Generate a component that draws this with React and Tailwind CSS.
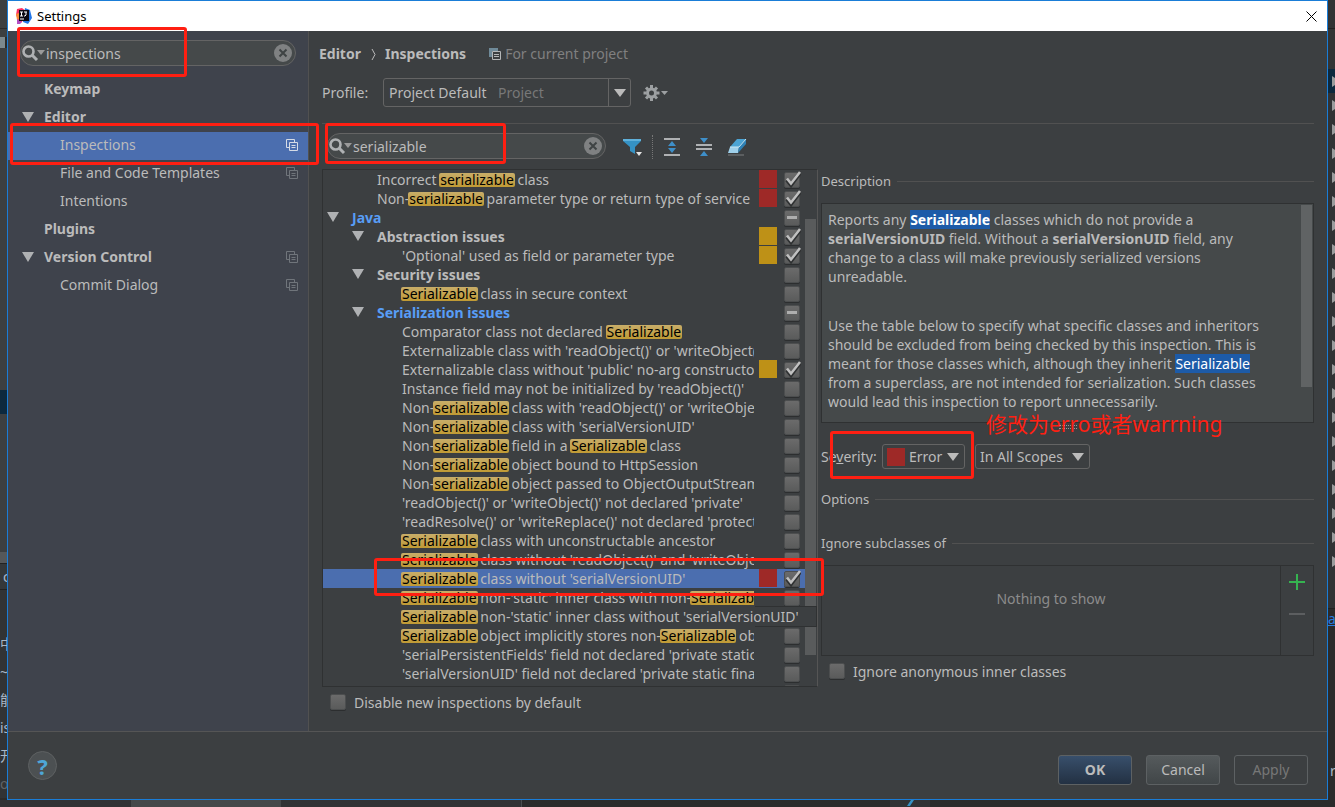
import { useState } from "react";

const SIDEBAR = [
  { label: "Keymap", bold: true },
  { label: "Editor", bold: true, open: true },
  { label: "Inspections", scope: true, selected: true },
  { label: "File and Code Templates", scope: true },
  { label: "Intentions" },
  { label: "Plugins", bold: true },
  { label: "Version Control", bold: true, open: true, scope: true },
  { label: "Commit Dialog", scope: true },
];

// level 0 = language, 1 = group, 2 = nested inspection
const INSPECTIONS = [
  { level: 1, text: "Incorrect serializable class", color: "red", state: "on" },
  { level: 1, text: "Non-serializable parameter type or return type of service method", color: "red", state: "on" },
  { level: 0, text: "Java", group: true, changed: true, state: "mixed" },
  { level: 1, text: "Abstraction issues", group: true, color: "yellow", state: "on" },
  { level: 2, text: "'Optional' used as field or parameter type", color: "yellow", state: "on" },
  { level: 1, text: "Security issues", group: true },
  { level: 2, text: "Serializable class in secure context" },
  { level: 1, text: "Serialization issues", group: true, changed: true, state: "mixed" },
  { level: 2, text: "Comparator class not declared Serializable" },
  { level: 2, text: "Externalizable class with 'readObject()' or 'writeObject()'" },
  { level: 2, text: "Externalizable class without 'public' no-arg constructor", color: "yellow", state: "on" },
  { level: 2, text: "Instance field may not be initialized by 'readObject()'" },
  { level: 2, text: "Non-serializable class with 'readObject()' or 'writeObject()'" },
  { level: 2, text: "Non-serializable class with 'serialVersionUID'" },
  { level: 2, text: "Non-serializable field in a Serializable class" },
  { level: 2, text: "Non-serializable object bound to HttpSession" },
  { level: 2, text: "Non-serializable object passed to ObjectOutputStream" },
  { level: 2, text: "'readObject()' or 'writeObject()' not declared 'private'" },
  { level: 2, text: "'readResolve()' or 'writeReplace()' not declared 'protected'" },
  { level: 2, text: "Serializable class with unconstructable ancestor" },
  { level: 2, text: "Serializable class without 'readObject()' and 'writeObject()'" },
  { level: 2, text: "Serializable class without 'serialVersionUID'", color: "red", state: "on", selected: true },
  { level: 2, text: "Serializable non-'static' inner class with non-Serializable outer" },
  { level: 2, text: "Serializable non-'static' inner class without 'serialVersionUID'", tooltip: true },
  { level: 2, text: "Serializable object implicitly stores non-Serializable object" },
  { level: 2, text: "'serialPersistentFields' field not declared 'private static final'" },
  { level: 2, text: "'serialVersionUID' field not declared 'private static final'" },
  { level: 2, text: "" },
];

const INDENT = ["pl-[29px]", "pl-[54px]", "pl-[79px]"];
const SWATCH = { red: "bg-[#9e2927]", yellow: "bg-[#be9117]" };

const Arrow = ({ className = "", height = 10 }) => (
  <svg className={className} width="12" height={height} viewBox="0 0 12 10" preserveAspectRatio="none" aria-hidden="true">
    <path d="M0 0h12L6 10z" fill="currentColor" />
  </svg>
);

const ScopeIcon = ({ className = "" }) => (
  <svg className={className} width="12" height="12" viewBox="0 0 12 12" fill="none" stroke="currentColor" aria-hidden="true">
    <path d="M3 8.500H.5v-8h8V3" />
    <path d="M3.500 3.500h8v8h-8zM5.500 6.500h4M5.500 8.500h4" />
  </svg>
);

const SearchField = ({ id, label, value, onChange }) => (
  <div className="flex h-[26px] items-center rounded-full border border-[#646464] bg-[#45494a] pr-[3px]">
    <svg width="24" height="18" viewBox="0 0 24 18" fill="none" aria-hidden="true">
      <circle cx="7.500" cy="7.500" r="5" stroke="#afb1b3" strokeWidth="2.600" />
      <path d="M11 11l5 5" stroke="#afb1b3" strokeWidth="3" />
      <path d="M16 6h8l-4 5z" fill="#9a9a9a" />
    </svg>
    <label htmlFor={id} className="sr-only">
      {label}
    </label>
    <input
      id={id}
      type="text"
      value={value}
      onChange={(e) => onChange(e.target.value)}
      className="min-w-0 flex-1 bg-transparent pt-[2px] pl-px text-[#bbbbbb] outline-none"
    />
    <button type="button" aria-label="Clear" onClick={() => onChange("")}>
      <svg width="18" height="18" viewBox="0 0 18 18" aria-hidden="true">
        <circle cx="9" cy="9" r="9" fill="#7f8182" />
        <path d="M5.500 5.500l7 7M12.500 5.500l-7 7" stroke="#3f4344" strokeWidth="2" />
      </svg>
    </button>
  </div>
);

const CheckBox = ({ state, ...props }) => (
  <span className="relative flex size-[18px] shrink-0">
    <input
      type="checkbox"
      defaultChecked={state === "on"}
      className="peer m-px size-4 appearance-none rounded-[2px] border border-[#4c4e4f] bg-linear-to-b from-[#6b6b6b] to-[#5a5b5b] shadow-[0_1px_0_#2c2e2f]"
      {...props}
    />
    <svg
      className="pointer-events-none absolute inset-0 hidden peer-checked:block"
      width="18"
      height="18"
      viewBox="0 0 18 18"
      fill="none"
      aria-hidden="true"
    >
      <path d="M4 9l4 5 9-12" stroke="#2f3132" strokeWidth="4" />
      <path d="M4 7.500l4 5 9-11.500" stroke="#c0c0c0" strokeWidth="2.600" />
    </svg>
    {state === "mixed" && <span className="pointer-events-none absolute top-[7px] left-1 h-[3px] w-[10px] bg-[#aeaeae]" />}
  </span>
);

const Highlighted = ({ text }) =>
  text.split(/(\bserializable)/i).map((part, i) =>
    i % 2 ? (
      <mark
        key={i}
        className="-mx-px inline-block h-[14px] rounded-[2px] bg-linear-to-b from-[#c8ad68] to-[#c09a33] px-px leading-[14px] text-black"
      >
        {part}
      </mark>
    ) : (
      part
    )
  );

const InspectionRow = ({ item }) => (
  <li className={`relative flex h-[19px] shrink-0 items-center ${item.selected ? "bg-[#4b6eaf]" : ""}`}>
    <div
      className={`relative min-w-0 flex-1 leading-[19px] whitespace-pre ${INDENT[item.level]} ${
        item.tooltip ? "z-20" : "overflow-hidden"
      } ${item.group ? "font-bold" : ""} ${item.changed ? "text-[#589df6]" : ""}`}
    >
      {item.group && <Arrow className={`absolute top-1 text-[#afb1b3] ${item.level ? "left-[29px]" : "left-1"}`} />}
      <Highlighted text={item.text} />
    </div>
    {item.tooltip && (
      <span className="absolute -top-px right-[-12px] z-10 h-[21px] w-[62px] border border-l-0 border-[#2f3132] bg-[#3c3f41]" />
    )}
    <span className={`mr-[6px] mb-px ml-[5px] h-[18px] w-[18px] ${item.color ? SWATCH[item.color] : ""}`} />
    <CheckBox state={item.state} aria-label={item.text || "More"} />
    <span className="w-1" />
  </li>
);

const Titled = ({ children }) => (
  <h3 className="flex h-5 items-center gap-[6px] text-[13px]">
    {children}
    <span className="h-px flex-1 bg-[#515151]" />
  </h3>
);

const ToolIcon = ({ label, children }) => (
  <button type="button" aria-label={label} className="shrink-0">
    <svg width="20" height="20" viewBox="0 0 20 20" fill="none" aria-hidden="true">
      {children}
    </svg>
  </button>
);

// slices of the editor that stay visible around the dialog
const LeftEdge = () => (
  <div className="flex w-[7px] shrink-0 flex-col overflow-hidden bg-[#2b2b2b] whitespace-nowrap text-[#a9b7c6]">
    <div className="h-[29px] border-b border-[#2a2a2a] bg-[#3c3f41]" />
    <div className="h-2 bg-[#3c3f41]" />
    <div className="h-[11px] w-[5px] bg-[#7c898e]" />
    <div className="h-[342px] bg-[#3c3f41]" />
    <div className="h-6 bg-[#0d293e]" />
    <div className="h-[138px] bg-[#3c3f41]" />
    <div className="h-[11px] bg-[#55585a]" />
    <div className="h-[27px] border-y border-[#222222] bg-[#34383a] pl-[3px] leading-[25px]">c</div>
    <div className="h-10 bg-[#313335]" />
    <div className="flex flex-col bg-[#313335] text-sm leading-7">
      <span>中</span>
      <span>~</span>
      <span>能</span>
      <span>is</span>
      <span>开</span>
      <span className="text-[#606366]">on</span>
    </div>
  </div>
);

const RightEdge = () => (
  <div className="flex w-[7px] shrink-0 flex-col overflow-hidden bg-[#2b2b2b] whitespace-nowrap">
    <div className="h-[29px] border-b border-[#222222] bg-[#313335]" />
    <div className="h-10 bg-[#323435]" />
    {Array.from({ length: 21 }, (_, i) => (
      <div key={i} className={`flex h-6 items-center justify-end ${i === 0 ? "bg-[#0d293e]" : "bg-[#313335]"}`}>
        <svg width="3" height="11" viewBox="0 0 3 11" aria-hidden="true">
          <path d="M0 0l3 2v7l-3 2z" fill="#9a9c9d" />
        </svg>
      </div>
    ))}
    <div className="h-[36px] border-b border-[#222222] bg-[#313335]" />
    <div className="h-6 text-sm text-[#287bde] underline">at</div>
    <div className="h-32" />
    <div className="pl-[2px] text-sm text-[#a9b7c6]">r</div>
  </div>
);

const App = () => {
  const [settingsQuery, setSettingsQuery] = useState("inspections");
  const [inspectionQuery, setInspectionQuery] = useState("serializable");

  return (
    <div className="relative flex h-screen flex-col overflow-hidden bg-[#2b2b2b] font-['Noto_Sans','Noto_Sans_CJK_SC',sans-serif] text-sm text-[#bbbbbb]">
      <div className="flex min-h-0 flex-1">
        <LeftEdge />
        <div className="flex min-w-0 flex-1 flex-col border border-[#1a7dd7] bg-[#3c3f41]">
          <header className="flex h-[30px] shrink-0 items-center gap-[5px] bg-white pr-[10px] pl-2 text-[13px] text-black">
            <svg width="16" height="16" viewBox="0 0 16 16" aria-hidden="true">
              <path d="M1 1l5-1 4 3-4 11-5 2 1-5-2-4z" fill="#fc2f62" />
              <path d="M9 0l5 2 2 8-4 6-5-2z" fill="#2377e8" />
              <path d="M0 6l3-1 1 6-3 1z" fill="#f98b3a" />
              <path d="M1 11l5 3-2 2H1z" fill="#b24fc4" />
              <path d="M3 2h10v11H3z" fill="#0a0a12" />
              <path d="M4 4h3M5.500 4v4M4 8h3M8 4h3M10 4v3l-1 1H8M4 11h4" stroke="#fff" fill="none" />
            </svg>
            <h1 className="flex-1">Settings</h1>
            <button type="button" aria-label="Close">
              <svg width="11" height="11" viewBox="0 0 11 11" stroke="#000" aria-hidden="true">
                <path d="M.5.5l10 10M10.500.5l-10 10" />
              </svg>
            </button>
          </header>

          <div className="flex min-h-0 flex-1 border-b border-[#555555]">
            <nav className="w-[301px] shrink-0 border-r border-[#515151] bg-[#3f434c] pt-[9px]">
              <div className="mx-3 mb-[10px]">
                <SearchField id="settings-search" label="Search settings" value={settingsQuery} onChange={setSettingsQuery} />
              </div>
              <ul>
                {SIDEBAR.map((item) => (
                  <li key={item.label} className={item.selected ? "bg-[#4b6eaf]" : ""}>
                    <a href="#" className="flex h-7 items-center pr-[10px] pb-[2px] pl-[14px]">
                      <span className="w-[22px]">{item.open && <Arrow className="text-[#afb1b3]" />}</span>
                      <span className={`flex-1 ${item.bold ? "font-bold" : "pl-4"}`}>{item.label}</span>
                      {item.scope && <ScopeIcon className={item.selected ? "text-[#d5dbe6]" : "text-[#70757b]"} />}
                    </a>
                  </li>
                ))}
              </ul>
            </nav>

            <main className="flex min-w-0 flex-1 flex-col px-[13px] pt-3">
              <div className="-ml-[3px] flex h-[22px] items-center">
                <h2 className="flex items-center font-bold">
                  <span>Editor</span>
                  <svg className="mr-[9px] ml-[10px]" width="5" height="11" viewBox="0 0 5 11" fill="none" stroke="#bbbbbb" aria-hidden="true">
                    <path d="M1 0l3 5.500L1 11" />
                  </svg>
                  <span>Inspections</span>
                </h2>
                <svg className="mr-1 ml-[23px]" width="12" height="12" viewBox="0 0 12 12" fill="none" aria-hidden="true">
                  <path d="M0 0h9v3H3v6H0z" fill="#6f8a99" />
                  <path d="M3.500 3.500h8v8h-8z" stroke="#b5b7b8" />
                  <path d="M5 6.500h5M5 8.500h5" stroke="#b5b7b8" />
                </svg>
                <span className="text-[#808080]">For current project</span>
              </div>

              <div className="mt-[13px] flex h-[29px] items-center">
                <label htmlFor="profile" className="w-[61px]">
                  Profile:
                </label>
                <div className="relative flex h-[29px] w-[248px] items-center rounded-[3px] border border-[#646464]">
                  <select id="profile" className="h-full w-full appearance-none bg-transparent pl-[5px] outline-none">
                    <option>Project Default</option>
                  </select>
                  <span className="pointer-events-none absolute left-[114px] text-[#787878]">Project</span>
                  <span className="pointer-events-none absolute right-0 flex h-full w-[22px] items-center justify-center border-l border-[#646464]">
                    <Arrow height={8} />
                  </span>
                </div>
                <button type="button" aria-label="Profile actions" className="ml-3">
                  <svg width="26" height="18" viewBox="0 0 26 18" fill="none" aria-hidden="true">
                    <circle cx="8.500" cy="9" r="4" stroke="#9da0a2" strokeWidth="3" />
                    <path
                      d="M8.500 1v3M8.500 14v3M.5 9h3M13.500 9h3M3 3.500l2 2M12 12.500l2 2M14 3.500l-2 2M5 12.500l-2 2"
                      stroke="#9da0a2"
                      strokeWidth="3"
                    />
                    <path d="M18 7h7l-3.500 4z" fill="#9da0a2" />
                  </svg>
                </button>
              </div>

              <hr className="mt-4 shrink-0 border-[#515151]" />

              <div className="mt-[9px] flex h-[26px] shrink-0 items-center">
                <div className="ml-[5px] w-[279px]">
                  <SearchField id="inspection-search" label="Search inspections" value={inspectionQuery} onChange={setInspectionQuery} />
                </div>
                <div className="ml-4 flex items-center pt-[2px]">
                  <ToolIcon label="Filter">
                    <path d="M1 2h18v2l-6 6v7l-5-3v-4L1 4z" fill="#3592c4" />
                    <path d="M1 2h18v2H1z" fill="#5fb0da" />
                    <path d="M14 15h6l-3 4z" fill="#e5e5e5" />
                  </ToolIcon>
                  <span className="mx-[10px] h-6 border-l border-dotted border-[#777777]" />
                  <ToolIcon label="Expand all">
                    <path d="M1 2h16M1 18h16" stroke="#afb1b3" strokeWidth="2" />
                    <path d="M5 9l4-5 4 5zM5 11l4 5 4-5z" fill="#3e8fc9" />
                  </ToolIcon>
                  <span className="w-3" />
                  <ToolIcon label="Collapse all">
                    <path d="M1 8h16M1 12h16" stroke="#afb1b3" strokeWidth="2" />
                    <path d="M5 1h8l-4 5zM5 19h8l-4-5z" fill="#3e8fc9" />
                  </ToolIcon>
                  <span className="w-3" />
                  <ToolIcon label="Reset to empty">
                    <path d="M1 17h16v2H1z" fill="#5b5e60" />
                    <path d="M10 2h9l-7 8H3z" fill="#4ba3d3" />
                    <path d="M3 10h9l-1 6H1z" fill="#9fd0ea" />
                    <path d="M12 10l7-8v5l-8 9z" fill="#2f81b5" />
                    <path d="M3 10h9l7-8" stroke="#c9e6f4" />
                  </ToolIcon>
                </div>
              </div>

              <div className="mt-[10px] flex min-h-0 flex-1">
                <section className="flex w-[496px] shrink-0 flex-col">
                  <div className="flex min-h-0 flex-1 overflow-hidden border border-[#2f3132] border-r-[#555555]">
                    <ul className="flex min-w-0 flex-1 flex-col">
                      {INSPECTIONS.map((item, i) => (
                        <InspectionRow key={i} item={item} />
                      ))}
                    </ul>
                    <div className="w-3 pt-[49px] pr-px">
                      <div className="h-[436px] bg-[#595b5c]" />
                    </div>
                  </div>
                  <label className="flex h-[44px] shrink-0 items-start gap-[7px] pt-[6px] pl-[7px] leading-[19px]">
                    <CheckBox />
                    Disable new inspections by default
                  </label>
                </section>

                <section className="min-w-0 flex-1 pl-[3px]">
                  <div className="pt-[2px]">
                    <Titled>Description</Titled>
                  </div>
                  <div className="mt-3 flex h-[220px] border border-[#2f3132] bg-[#45494a]">
                    <div className="flex-1 py-[6px] pl-[6px] leading-[19px]">
                      <p>
                        Reports any <b className="bg-[#1d5ba8] text-white">Serializable</b> classes which do not provide a
                        <br />
                        <b>serialVersionUID</b> field. Without a <b>serialVersionUID</b> field, any
                        <br />
                        change to a class will make previously serialized versions
                        <br />
                        unreadable.
                      </p>
                      <p className="mt-[30px]">
                        Use the table below to specify what specific classes and inheritors
                        <br />
                        should be excluded from being checked by this inspection. This is
                        <br />
                        meant for those classes which, although they inherit <span className="bg-[#1d5ba8] text-white">Serializable</span>
                        <br />
                        from a superclass, are not intended for serialization. Such classes
                        <br />
                        would lead this inspection to report unnecessarily.
                      </p>
                    </div>
                    <div className="w-3 pt-px pr-px">
                      <div className="h-[182px] bg-[#606364]" />
                    </div>
                  </div>
                  <div className="mx-auto mt-[2px] h-1 w-[18px] border-y border-dotted border-[#999999]" />

                  <div className="mt-[15px] flex h-[25px] items-center">
                    <label htmlFor="severity" className="w-[61px]">
                      Se<u>v</u>erity:
                    </label>
                    <div className="relative flex h-full w-[83px] items-center rounded-[3px] border border-[#646464] pl-1">
                      <span className="size-[18px] bg-[#9e2927]" />
                      <select id="severity" className="h-full flex-1 appearance-none bg-transparent pl-1 outline-none">
                        <option>Error</option>
                      </select>
                      <Arrow height={8} className="pointer-events-none absolute right-[5px]" />
                    </div>
                    <div className="relative ml-[10px] flex h-full w-[115px] items-center rounded-[3px] border border-[#646464]">
                      <select aria-label="Scope" className="h-full w-full appearance-none bg-transparent pl-1 outline-none">
                        <option>In All Scopes</option>
                      </select>
                      <Arrow height={8} className="pointer-events-none absolute right-[5px]" />
                    </div>
                  </div>

                  <div className="mt-5">
                    <Titled>Options</Titled>
                  </div>
                  <div className="mt-6">
                    <Titled>Ignore subclasses of</Titled>
                  </div>
                  <div className="mt-3 flex h-[91px] border border-[#2f3132]">
                    <div className="flex-1 pt-[23px] text-center leading-5 text-[#8c8c8c]">Nothing to show</div>
                    <div className="flex w-[33px] flex-col items-center gap-4 border-l border-[#2f3132] pt-2">
                      <button type="button" aria-label="Add">
                        <svg width="16" height="16" viewBox="0 0 16 16" aria-hidden="true">
                          <path d="M7 0h2v7h7v2H9v7H7V9H0V7h7z" fill="#35b350" />
                        </svg>
                      </button>
                      <button type="button" aria-label="Remove" disabled>
                        <svg width="16" height="16" viewBox="0 0 16 16" aria-hidden="true">
                          <path d="M0 7h16v2H0z" fill="#5c5e60" />
                        </svg>
                      </button>
                    </div>
                  </div>
                  <label className="mt-[6px] flex items-start gap-[7px] pl-[7px] leading-[19px]">
                    <CheckBox />
                    Ignore anonymous inner classes
                  </label>
                </section>
              </div>
            </main>
          </div>

          <footer className="flex h-[67px] shrink-0 items-start gap-[14px] pt-[23px] pr-[19px] pl-5">
            <button
              type="button"
              aria-label="Help"
              className="-mt-1 flex size-[29px] items-center justify-center rounded-full border border-[#5e6162] bg-[#4c5052] text-[22px] leading-5 font-bold text-[#4ea6d6]"
            >
              ?
            </button>
            <span className="flex-1" />
            <button
              type="button"
              className="h-[30px] w-[74px] rounded-[3px] border border-[#5d6163] bg-linear-to-b from-[#384f6b] to-[#233143] font-bold"
            >
              OK
            </button>
            <button
              type="button"
              className="h-[30px] w-[74px] rounded-[3px] border border-[#5d6163] bg-linear-to-b from-[#555a5c] to-[#414648]"
            >
              Cancel
            </button>
            <button type="button" disabled className="h-[30px] w-[74px] rounded-[3px] border border-[#5d6163] text-[#777777]">
              Apply
            </button>
          </footer>
        </div>
        <RightEdge />
      </div>

      <div className="flex h-[7px] shrink-0 bg-[#2b2b2b]">
        <span className="w-[131px] bg-[#313335]" />
        <span className="w-[150px] bg-[#45494a]" />
        <span className="w-[240px] bg-[#313335]" />
        <span className="w-px bg-[#4a4d4f]" />
        <span className="w-[368px]" />
        <span className="flex w-10 justify-center bg-[#313335]">
          <svg width="8" height="6" viewBox="0 0 8 6" aria-hidden="true">
            <path d="M1 6l4-6h3L4 6z" fill="#3592c4" />
          </svg>
        </span>
      </div>

      {/* review marks drawn over the dialog */}
      <div className="pointer-events-none absolute top-[27px] left-[17px] h-[50px] w-[170px] rounded-[3px] border-[3px] border-[#ff1f12]" />
      <div className="pointer-events-none absolute top-[123px] left-[10px] h-[42px] w-[309px] rounded-[3px] border-[3px] border-[#ff1f12]" />
      <div className="pointer-events-none absolute top-[123px] left-[325px] h-[41px] w-[181px] rounded-[3px] border-[3px] border-[#ff1f12]" />
      <div className="pointer-events-none absolute top-[558px] left-[374px] z-30 h-[38px] w-[450px] rounded-[3px] border-[3px] border-[#ff1f12]" />
      <div className="pointer-events-none absolute top-[431px] left-[830px] h-[48px] w-[144px] rounded-[3px] border-[3px] border-[#ff1f12]" />
      <p className="pointer-events-none absolute top-[409px] left-[986px] text-[21px] leading-[30px] whitespace-nowrap text-[#ff1f12]">
        修改为erro或者warrning
      </p>
    </div>
  );
};

export default App;
